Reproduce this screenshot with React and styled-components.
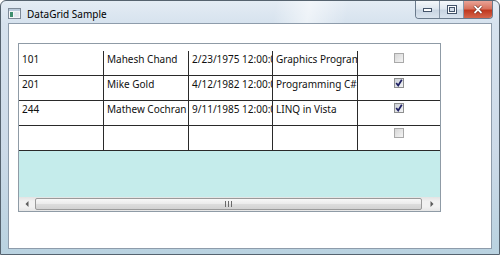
import React from 'react';
import styled, { createGlobalStyle } from 'styled-components';

const Global = createGlobalStyle`
  html, body { margin: 0; padding: 0; background: #fff; }
  body { font-family: "Noto Sans", "Liberation Sans", sans-serif; }
  * { box-sizing: border-box; }
`;

const Window = styled.div`
  width: 500px;
  height: 255px;
  display: flex;
  flex-direction: column;
  border: 1px solid #56636f;
  border-radius: 6px 6px 0 0;
  background: linear-gradient(180deg, #e4ecf4 0%, #d6e2ee 9%, #ccdae8 60%, #b9d2e0 100%);
  padding: 0 7px 5px 7px;
  overflow: hidden;
`;

const TitleBar = styled.div`
  height: 22px;
  display: flex;
  align-items: flex-start;
  background: linear-gradient(100deg, transparent 0%, transparent 55%, rgba(255,255,255,0.55) 62%, transparent 70%, transparent 100%);
`;

const AppIcon = styled.svg`
  margin-top: 7px;
  width: 13px;
  height: 11px;
  flex: none;
`;

const Title = styled.span`
  margin-left: 6px;
  margin-top: 6px;
  font-size: 10px;
  line-height: 14px;
  color: #000;
`;

const Caption = styled.div`
  margin-left: auto;
  display: flex;
  height: 18px;
  border: 1px solid #6a7a8c;
  border-top: none;
  border-radius: 0 0 4px 4px;
  overflow: hidden;
  margin-right: -1px;
`;

const CapButton = styled.div`
  width: ${p => p.$w}px;
  height: 100%;
  display: flex;
  align-items: center;
  justify-content: center;
  border-left: ${p => (p.$first ? 'none' : '1px solid #8796a8')};
  background: ${p =>
    p.$close
      ? 'linear-gradient(180deg, #e9a396 0%, #d8735e 45%, #c0391f 55%, #d5664c 100%)'
      : 'linear-gradient(180deg, #f4f7fa 0%, #dfe7ef 45%, #c9d5e2 55%, #d9e3ee 100%)'};
`;

const Client = styled.div`
  flex: 1;
  background: #fff;
  border: 1px solid #8e9cab;
  padding: 19px 0 0 9px;
`;

const Grid = styled.div`
  width: 423px;
  height: 169px;
  border: 1px solid #8f9ba6;
  display: flex;
  flex-direction: column;
  background: #fff;
`;

const HeaderStrip = styled.div`
  height: 7px;
  flex: none;
`;

const Row = styled.div`
  height: 25px;
  flex: none;
  display: flex;
  border-bottom: 1px solid #2a2a2a;
`;

const Cell = styled.div`
  width: ${p => p.$w}px;
  flex: none;
  border-right: ${p => (p.$last ? 'none' : '1px solid #2a2a2a')};
  padding: 1px 0 0 3px;
  font-size: 10px;
  line-height: 14px;
  color: #111;
  white-space: nowrap;
  overflow: hidden;
  display: flex;
  justify-content: ${p => (p.$center ? 'center' : 'flex-start')};
  align-items: flex-start;
`;

const Box = styled.div`
  margin-top: 1px;
  margin-left: -4px;
  width: 10px;
  height: 10px;
  border: 1px solid ${p => (p.$checked ? '#8e8f8f' : '#a9a9a9')};
  background: ${p =>
    p.$checked
      ? 'linear-gradient(135deg, #cbcfd5 0%, #f3f4f6 100%)'
      : 'linear-gradient(135deg, #d6d6d6 0%, #f4f4f4 100%)'};
  display: flex;
  align-items: center;
  justify-content: center;
`;

const Fill = styled.div`
  flex: 1;
  background: #c5eceb;
`;

const ScrollBar = styled.div`
  height: 14px;
  flex: none;
  display: flex;
  align-items: stretch;
  background: linear-gradient(180deg, #e3e3e3 0%, #f1f1f1 30%, #f1f1f1 70%, #e6e6e6 100%);
`;

const ArrowBtn = styled.div`
  width: ${p => p.$w}px;
  flex: none;
  display: flex;
  align-items: center;
  justify-content: center;
`;

const Thumb = styled.div`
  flex: 1;
  margin: 1px;
  border: 1px solid #9a9a9a;
  border-radius: 2px;
  background: linear-gradient(180deg, #f7f7f7 0%, #ececec 45%, #dcdcdc 55%, #d2d2d2 100%);
  display: flex;
  align-items: center;
  justify-content: center;
`;

const cols = [85, 85, 84, 85, 82];

const rows = [
  { id: '101', name: 'Mahesh Chand', dob: '2/23/1975 12:00:00 AM', book: 'Graphics Programming with GDI+', mvp: false },
  { id: '201', name: 'Mike Gold', dob: '4/12/1982 12:00:00 AM', book: 'Programming C#', mvp: true },
  { id: '244', name: 'Mathew Cochran', dob: '9/11/1985 12:00:00 AM', book: 'LINQ in Vista', mvp: true },
  { id: '', name: '', dob: '', book: '', mvp: false },
];

function CheckBox({ checked }) {
  return (
    <Box $checked={checked}>
      {checked && (
        <svg width="8" height="8" viewBox="0 0 8 8">
          <path d="M1.2 4 L3.2 6.5 L6.8 0.8" fill="none" stroke="#1d1f63" strokeWidth="1.7" />
        </svg>
      )}
    </Box>
  );
}

export default function App() {
  return (
    <>
      <Global />
      <Window>
        <TitleBar>
          <AppIcon viewBox="0 0 13 11">
            <rect x="0.5" y="0.5" width="12" height="10" fill="#f4f6f8" stroke="#7d8a98" />
            <rect x="1" y="1" width="11" height="2" fill="#b9c9da" />
            <rect x="2" y="4" width="3" height="5" fill="#3f8f6f" />
            <rect x="6" y="4" width="5" height="5" fill="#e2e8ee" />
          </AppIcon>
          <Title>DataGrid Sample</Title>
          <Caption>
            <CapButton $w={23} $first>
              <svg width="9" height="4" viewBox="0 0 9 4">
                <rect x="0.5" y="0.5" width="8" height="3" fill="#fff" stroke="#44546a" />
              </svg>
            </CapButton>
            <CapButton $w={24}>
              <svg width="10" height="9" viewBox="0 0 10 9">
                <rect x="0.5" y="0.5" width="9" height="8" fill="#fff" stroke="#44546a" />
                <rect x="2.5" y="2.5" width="5" height="4" fill="#d4dde8" stroke="#44546a" />
              </svg>
            </CapButton>
            <CapButton $w={29} $close>
              <svg width="10" height="9" viewBox="0 0 10 9">
                <path d="M1.5 1 L8.5 8 M8.5 1 L1.5 8" stroke="#5a1a10" strokeWidth="3" />
                <path d="M1.5 1 L8.5 8 M8.5 1 L1.5 8" stroke="#fff" strokeWidth="1.8" />
              </svg>
            </CapButton>
          </Caption>
        </TitleBar>
        <Client>
          <Grid>
            <HeaderStrip />
            {rows.map((r, i) => (
              <Row key={i}>
                <Cell $w={cols[0]}>{r.id}</Cell>
                <Cell $w={cols[1]}>{r.name}</Cell>
                <Cell $w={cols[2]}>{r.dob}</Cell>
                <Cell $w={cols[3]}>{r.book}</Cell>
                <Cell $w={cols[4]} $last $center>
                  <CheckBox checked={r.mvp} />
                </Cell>
              </Row>
            ))}
            <Fill />
            <ScrollBar>
              <ArrowBtn $w={15}>
                <svg width="4" height="6" viewBox="0 0 4 6">
                  <path d="M3.5 0 L0.5 3 L3.5 6 Z" fill="#5c5c5c" />
                </svg>
              </ArrowBtn>
              <Thumb>
                <svg width="7" height="6" viewBox="0 0 7 6">
                  <path d="M0.5 0 V6 M3.5 0 V6 M6.5 0 V6" stroke="#6a6a6a" strokeWidth="1" />
                </svg>
              </Thumb>
              <ArrowBtn $w={17}>
                <svg width="4" height="6" viewBox="0 0 4 6">
                  <path d="M0.5 0 L3.5 3 L0.5 6 Z" fill="#5c5c5c" />
                </svg>
              </ArrowBtn>
            </ScrollBar>
          </Grid>
        </Client>
      </Window>
    </>
  );
}
